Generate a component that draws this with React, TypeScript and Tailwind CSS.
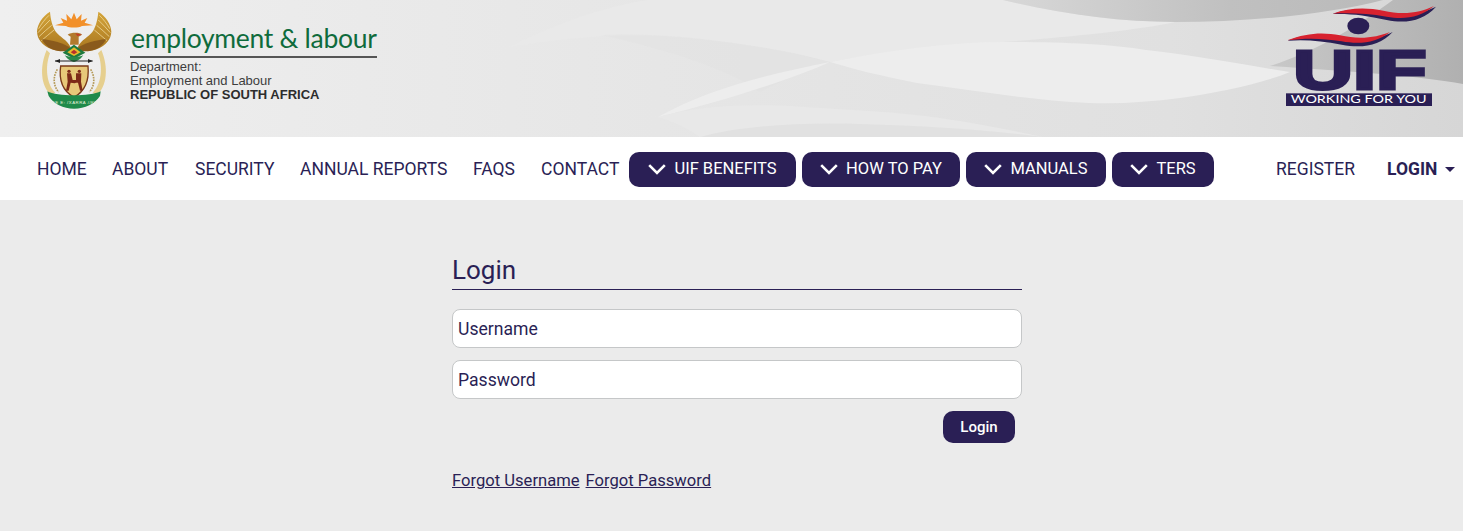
const navy = "#2a1f55"

const leftLinks = [
  { label: "HOME", width: "w-[50px]" },
  { label: "ABOUT", width: "w-[58px]" },
  { label: "SECURITY", width: "w-[80px]" },
  { label: "ANNUAL REPORTS", width: "w-[148px]" },
  { label: "FAQS", width: "w-[43px]" },
  { label: "CONTACT", width: "w-[75px]" },
]
const pills = [
  { label: "UIF BENEFITS", width: "w-[167px]" },
  { label: "HOW TO PAY", width: "w-[158px]" },
  { label: "MANUALS", width: "w-[140px]" },
  { label: "TERS", width: "w-[102px]" },
]

function HeaderWaves() {
  return (
    <svg className="absolute inset-0 h-full w-full" viewBox="0 0 1463 137" preserveAspectRatio="none">
      <defs>
        <linearGradient id="base" x1="0" x2="1" y1="0" y2="0">
          <stop offset="0" stopColor="#efefef" />
          <stop offset="0.45" stopColor="#e6e6e6" />
          <stop offset="0.8" stopColor="#e0e0e0" />
          <stop offset="1" stopColor="#d6d6d6" />
        </linearGradient>
        <linearGradient id="dark" x1="0" x2="1" y1="0" y2="0">
          <stop offset="0" stopColor="#d8d8d8" />
          <stop offset="0.6" stopColor="#c0c0c0" />
          <stop offset="1" stopColor="#bababa" />
        </linearGradient>
        <linearGradient id="corner" x1="0" x2="1" y1="0" y2="0">
          <stop offset="0" stopColor="#c8c8c8" />
          <stop offset="1" stopColor="#b0b0b0" />
        </linearGradient>
      </defs>
      <rect width="1463" height="137" fill="url(#base)" />
      {/* upper highlight */}
      <path d="M509 47C560 22 600 8 647 0H1003C1060 14 1120 22 1175 22C1140 30 1060 38 1003 42C940 46 880 52 830 62C780 48 730 42 687 38C650 35 600 32 509 47Z" fill="#e9e9e9" />
      <path d="M601 35C660 32 740 40 830 62C800 72 780 82 760 92C730 70 670 50 601 35Z" fill="#e1e1e1" opacity="0.4" />
      {/* top band */}
      <path d="M1003 0C1060 14 1120 22 1175 22C1250 22 1330 14 1383 0Z" fill="url(#dark)" />
      {/* right corner */}
      <path d="M1270 66C1320 50 1360 24 1393 0H1463V84C1420 76 1360 72 1270 66Z" fill="url(#corner)" />
      {/* lower highlight */}
      <path d="M658 117C710 88 770 74 830 62C890 50 950 42 1003 42C1060 42 1110 44 1146 50C1200 56 1250 66 1290 72C1260 84 1220 92 1180 98C1150 102 1120 104 1089 103C1030 100 970 90 917 83C880 76 850 68 830 62C790 80 720 102 658 117Z" fill="#ededed" />
      <path d="M658 117C700 106 740 104 790 106C850 110 900 112 940 118C980 124 1010 130 1043 137H700C690 130 680 124 658 117Z" fill="#e8e8e8" />
      <path d="M700 137C740 126 800 122 860 124C930 126 990 130 1043 137Z" fill="#e1e1e1" />
    </svg>
  )
}

function CoatOfArms() {
  return (
    <svg width="80" height="100" viewBox="102 30 240 300" className="shrink-0">
      <defs>
        <linearGradient id="gold" x1="0" x2="0" y1="0" y2="1">
          <stop offset="0" stopColor="#d4a53a" />
          <stop offset="1" stopColor="#a9761f" />
        </linearGradient>
      </defs>
      {/* tusks */}
      <path d="M140 150C118 200 122 262 155 285L166 278C140 255 134 200 150 160Z" fill="#e6cf8e" />
      <path d="M304 150C326 200 322 262 289 285L278 278C304 255 310 200 294 160Z" fill="#e6cf8e" />
      {/* wings */}
      <path d="M150 35C128 48 112 72 111 95C112 118 126 135 155 148C178 156 196 156 212 142C200 118 180 112 168 96C158 82 152 60 150 35Z" fill="url(#gold)" />
      <path d="M295 35C317 48 333 72 334 95C333 118 319 135 290 148C267 156 249 156 233 142C245 118 265 112 277 96C287 82 293 60 295 35Z" fill="url(#gold)" />
      <g stroke="#f2dfa6" strokeWidth="2.2" fill="none">
        <path d="M147 46C134 58 124 72 116 86M150 60C138 72 126 84 114 98M155 76C142 86 130 98 117 110M162 90C150 100 136 112 124 122" />
        <path d="M298 46C311 58 321 72 329 86M295 60C307 72 319 84 331 98M290 76C303 86 315 98 328 110M283 90C295 100 309 112 321 122" />
      </g>
      <path d="M126 118C156 120 190 128 214 146C196 160 166 154 146 142C138 136 130 128 126 118Z" fill="#8a5a1c" />
      <path d="M318 118C288 120 254 128 230 146C248 160 278 154 298 142C306 136 314 128 318 118Z" fill="#8a5a1c" />
      {/* sun */}
      <path d="M222 38L230 58L245 42L243 62L262 54L254 68L279 76L246 78C236 84 208 84 198 78L165 76L190 68L182 54L201 62L199 42L214 58Z" fill="#f2902a" />
      {/* secretary bird head */}
      <path d="M203 104C212 97 240 96 246 104L236 110L236 134L210 134L212 110Z" fill="#b27a2e" />
      <path d="M226 100L246 104L232 108Z" fill="#c43a2b" />
      {/* protea */}
      <path d="M222 134L256 158L222 176L188 158Z" fill="#1d7a3e" />
      <path d="M222 142L242 157L222 168L202 157Z" fill="#e9bb2d" />
      <path d="M222 149L232 157L222 163L212 157Z" fill="#b8312b" />
      {/* leaves */}
      <path d="M194 166C204 180 214 184 222 186C230 184 240 180 250 166C236 172 208 172 194 166Z" fill="#2a8a4a" />
      {/* spear and kerrie */}
      <path d="M165 183H278" stroke="#222" strokeWidth="3" />
      <path d="M165 183L180 177L180 189Z M278 183L264 177L264 189Z" fill="#222" />
      {/* wheat */}
      <g stroke="#b59a58" strokeWidth="5" strokeDasharray="5 3" fill="none">
        <path d="M172 208C158 232 160 258 176 276" />
        <path d="M272 208C286 232 284 258 268 276" />
      </g>
      {/* shield */}
      <path d="M182 198H264C268 240 258 272 222 292C186 272 176 240 182 198Z" fill="#e7c879" stroke="#7a3a1a" strokeWidth="4" />
      <g fill="#7d2a18">
        <circle cx="207" cy="214" r="5" />
        <circle cx="238" cy="214" r="5" />
        <path d="M201 220H213L218 240H228L228 220H244L243 245L248 272H240L234 248H228L224 250L212 248L206 272H198L203 245Z" />
      </g>
      {/* ribbon */}
      <path d="M142 274C170 290 272 290 302 274L300 288C285 312 255 326 222 326C190 326 160 312 146 288Z" fill="#1f8a4a" />
      <text x="222" y="311" textAnchor="middle" fontSize="13" letterSpacing="1.5" fill="#e8f2dc" fontFamily="Liberation Sans, sans-serif">
        !KE E: /XARRA //KE
      </text>
    </svg>
  )
}

function UifLogo() {
  return (
    <svg width="213" height="137" viewBox="0 0 639 411" className="shrink-0">
      {/* swooshes */}
      <path d="M248 42C300 24 350 26 400 38C460 52 510 42 558 20C520 62 470 72 410 60C350 46 300 40 248 42Z" fill={navy} />
      <path d="M248 41C300 22 350 22 400 32C460 46 510 38 552 18C510 52 465 60 410 50C350 40 300 38 248 41Z" fill="#d7222f" />
      <path d="M112 122C170 102 220 100 270 112C330 128 385 118 428 96C390 138 335 146 275 134C215 122 165 118 112 122Z" fill={navy} />
      <path d="M112 121C170 98 220 96 270 106C330 120 380 112 420 96C380 128 330 134 275 124C215 114 165 114 112 121Z" fill="#d7222f" />
      <ellipse cx="325" cy="78" rx="33" ry="25" fill={navy} />
      {/* wordmark */}
      <text
        x="130"
        y="266"
        fontSize="165"
        fontWeight="700"
        fontFamily="Liberation Sans, sans-serif"
        textLength="400"
        lengthAdjust="spacingAndGlyphs"
        fill={navy}
        stroke={navy}
        strokeWidth="9"
      >
        UIF
      </text>
      <rect x="108" y="280" width="438" height="38" fill={navy} />
      <text
        x="122"
        y="309"
        fontSize="32"
        fontFamily="Lato, sans-serif"
        textLength="408"
        lengthAdjust="spacingAndGlyphs"
        fill="#ffffff"
      >
        WORKING FOR YOU
      </text>
    </svg>
  )
}

function Chevron() {
  return (
    <svg width="18" height="11" viewBox="0 0 18 11" fill="none" stroke="#ffffff" strokeWidth="2.6" className="shrink-0">
      <path d="M1.2 1.2L9 9L16.8 1.2" />
    </svg>
  )
}

export default function App() {
  return (
    <div className="min-h-[531px] bg-[#ebebeb] text-[#2a1f55] font-['Roboto',sans-serif]">
      <header className="relative flex h-[137px] items-start justify-between overflow-hidden">
        <HeaderWaves />
        <div className="relative ml-[34px] mt-[10px] flex items-start">
          <CoatOfArms />
          <div className="ml-[16px] w-[247px] pt-[13px] font-['Liberation_Sans',sans-serif]">
            <div className="h-[35px] border-b-2 border-[#555555] pl-[1px] font-['Lato',sans-serif] text-[26.5px] leading-[31px] tracking-[-0.3px] whitespace-nowrap text-[#0f6b3c]">
              employment &amp; labour
            </div>
            <div className="mt-[2px] text-[13px] leading-[14px] text-[#3d3d3d]">
              <p>Department:</p>
              <p>Employment and Labour</p>
              <p className="font-bold text-[#2d2d2d]">REPUBLIC OF SOUTH AFRICA</p>
            </div>
          </div>
        </div>
        <div className="relative">
          <UifLogo />
        </div>
      </header>

      <nav className="flex h-[63px] items-center bg-white pl-[37px] pt-[2px] text-[17.5px] whitespace-nowrap">
        <ul className="flex gap-[25px]">
          {leftLinks.map((link) => (
            <li key={link.label} className={link.width}>
              <a href="#">{link.label}</a>
            </li>
          ))}
        </ul>
        <ul className="ml-[13px] flex gap-[6px]">
          {pills.map((pill) => (
            <li key={pill.label}>
              <a
                href="#"
                className={`flex h-[35px] items-center justify-center gap-[8px] rounded-[10px] bg-[#2a1f55] text-[16.5px] text-white ${pill.width}`}
              >
                <Chevron />
                {pill.label}
              </a>
            </li>
          ))}
        </ul>
        <a href="#" className="ml-[62px] w-[79px]">
          REGISTER
        </a>
        <a href="#" className="ml-[32px] flex items-center gap-[8px] font-bold">
          LOGIN
          <span className="h-0 w-0 border-x-[5px] border-t-[5px] border-x-transparent border-t-[#2a1f55]" />
        </a>
      </nav>

      <main className="ml-[452px] w-[570px] pt-[54px]">
        <h1 className="border-b border-[#2a1f55] pb-[2px] text-[26px] leading-[33px]">Login</h1>
        <form className="mt-[19px] flex flex-col gap-[12px]">
          <input
            placeholder="Username"
            className="h-[39px] rounded-[8px] border border-[#c5c7c8] bg-white px-[5px] text-[17.6px] placeholder:text-[#2a1f55]"
          />
          <input
            type="password"
            placeholder="Password"
            className="h-[39px] rounded-[8px] border border-[#c5c7c8] bg-white px-[5px] text-[17.6px] placeholder:text-[#2a1f55]"
          />
          <div className="flex justify-end pr-[7px]">
            <button type="button" className="h-[32px] w-[72px] rounded-[10px] bg-[#2a1f55] text-[15px] font-medium text-white">
              Login
            </button>
          </div>
        </form>
        <div className="mt-[26px] flex gap-[6px] text-[16.6px] leading-[24px]">
          <a href="#" className="underline">
            Forgot Username
          </a>
          <a href="#" className="underline">
            Forgot Password
          </a>
        </div>
      </main>
    </div>
  )
}
